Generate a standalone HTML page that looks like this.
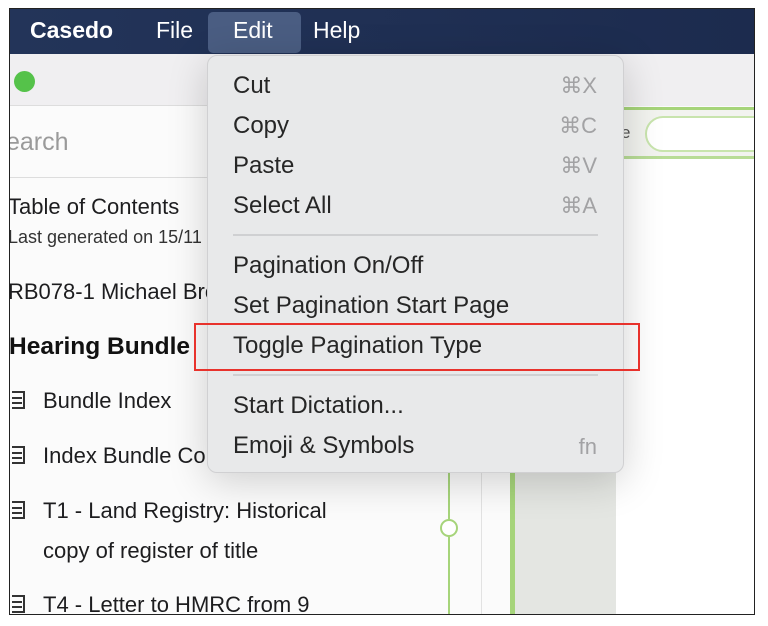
<!DOCTYPE html>
<html><head><meta charset="utf-8"><style>
*{margin:0;padding:0;box-sizing:border-box}
body{width:768px;height:626px;background:#fff;position:relative;overflow:hidden;font-family:"Liberation Sans",sans-serif;color:#1d1d1f}
.frame{position:absolute;left:9px;top:8px;width:746px;height:607px;border:1.5px solid #222;overflow:hidden;background:#fbfbfb}
.abs{position:absolute;white-space:nowrap}
.mb{position:absolute;left:0;top:0;width:746px;height:45px;background:linear-gradient(90deg,#233459,#1c2b4e)}
.mb span{position:absolute;top:8px;font-size:23px;color:#fff}
.menu{position:absolute;left:197px;top:46px;width:417px;height:418px;background:#e8e9ea;border-radius:10px;box-shadow:0 8px 40px rgba(0,0,0,.18);border:1px solid #d0d0d2}
.mi{position:absolute;left:25px;font-size:24px;color:#262626}
.sc{position:absolute;right:26px;font-size:22px;color:#a2a2a4}
.sep{position:absolute;left:25px;right:25px;height:2px;background:#cfd0d2}
.ic{position:absolute;left:2px;width:13px;height:18px;border:2px solid #333;border-left:none;}
.ic:before{content:"";position:absolute;left:0;top:4px;width:10px;height:2px;background:#333;box-shadow:0 5px 0 #333}
.t{font-size:22px}
</style></head><body>
<div class="frame">
<div class="abs" style="left:0;top:45px;width:746px;height:52px;background:#f0eff1"></div>
<div class="abs" style="left:4px;top:62px;width:21px;height:21px;border-radius:50%;background:#55c24a"></div>
<div class="abs" style="left:0;top:96px;width:440px;height:1px;background:#ddd"></div>
<div class="abs" style="left:-4px;top:119px;font-size:25px;color:#9a9a9a">earch</div>
<div class="abs" style="left:0;top:168px;width:440px;height:1px;background:#ddd"></div>
<div class="abs t" style="left:-2px;top:185px">Table of Contents</div>
<div class="abs" style="left:-2px;top:218px;font-size:18px;color:#333">Last generated on 15/11</div>
<div class="abs t" style="left:-2px;top:270px">RB078-1 Michael Bro</div>
<div class="abs" style="left:-1px;top:324px;font-size:24.5px;font-weight:bold;color:#111">Hearing Bundle</div>
<div class="ic" style="top:382px"></div><div class="abs t" style="left:33px;top:379px">Bundle Index</div>
<div class="ic" style="top:437px"></div><div class="abs t" style="left:33px;top:434px">Index Bundle Co</div>
<div class="ic" style="top:492px"></div><div class="abs t" style="left:33px;top:489px">T1 - Land Registry: Historical</div>
<div class="abs t" style="left:33px;top:529px">copy of register of title</div>
<div class="ic" style="top:586px"></div><div class="abs t" style="left:33px;top:583px">T4 - Letter to HMRC from 9</div>
<div class="abs" style="left:438px;top:440px;width:2px;height:170px;background:#a6d47a"></div>
<div class="abs" style="left:430px;top:510px;width:18px;height:18px;border-radius:50%;border:2px solid #a6d47a;background:#fff"></div>
<div class="abs" style="left:471px;top:97px;width:1px;height:510px;background:#e2e2e2"></div>
<div class="abs" style="left:500px;top:97px;width:5px;height:510px;background:#a6d47a"></div>
<div class="abs" style="left:505px;top:150px;width:102px;height:460px;background:#e4e6e2"></div>
<div class="abs" style="left:606px;top:150px;width:140px;height:460px;background:#fff"></div>
<div class="abs" style="left:505px;top:98px;width:241px;height:52px;background:#f2f3ef;border-top:3px solid #a6d47a;border-bottom:3px solid #b8dc96"></div>
<div class="abs" style="left:611px;top:114px;font-size:17px;color:#555">e</div>
<div class="abs" style="left:635px;top:107px;width:130px;height:36px;border-radius:18px;border:2px solid #c8e4ad;background:#fff"></div>
<div class="mb">
<div class="abs" style="left:198px;top:3px;width:93px;height:41px;background:#4a5d82;border-radius:5px"></div>
<span style="left:20px;font-weight:bold">Casedo</span>
<span style="left:146px">File</span>
<span style="left:223px">Edit</span>
<span style="left:303px">Help</span>
</div>
<div class="menu">
<div class="mi" style="top:16px">Cut</div><div class="sc" style="top:17px">⌘X</div>
<div class="mi" style="top:56px">Copy</div><div class="sc" style="top:57px">⌘C</div>
<div class="mi" style="top:96px">Paste</div><div class="sc" style="top:97px">⌘V</div>
<div class="mi" style="top:136px">Select All</div><div class="sc" style="top:137px">⌘A</div>
<div class="sep" style="top:178px"></div>
<div class="mi" style="top:196px">Pagination On/Off</div>
<div class="mi" style="top:236px">Set Pagination Start Page</div>
<div class="mi" style="top:276px">Toggle Pagination Type</div>
<div class="sep" style="top:318px"></div>
<div class="mi" style="top:336px">Start Dictation...</div>
<div class="mi" style="top:376px">Emoji &amp; Symbols</div><div class="sc" style="top:378px">fn</div>
</div>
<div class="abs" style="left:184px;top:314px;width:446px;height:48px;border:2px solid #e8322c"></div>
</div>
</body></html>
